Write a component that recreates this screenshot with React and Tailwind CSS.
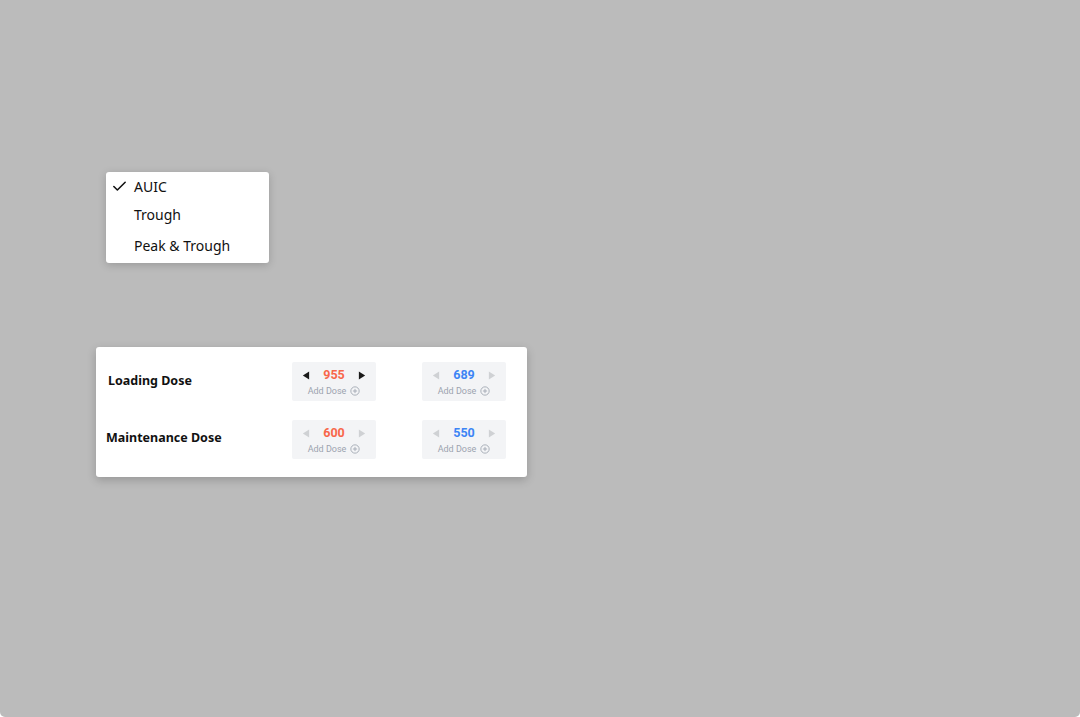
import { Check } from 'lucide-react'

const ROWS = [
  {
    label: 'Loading Dose',
    pad: 'pl-[12px] pb-[1px]',
    doses: [
      { value: 955, color: 'text-[#f8674a]', active: true },
      { value: 689, color: 'text-[#3d84f5]', active: false },
    ],
  },
  {
    label: 'Maintenance Dose',
    pad: 'pl-[10px] pb-[3px]',
    doses: [
      { value: 600, color: 'text-[#f8674a]', active: false },
      { value: 550, color: 'text-[#3d84f5]', active: false },
    ],
  },
]

const Tri = ({ dir, active }) => (
  <svg viewBox="0 0 8 10" width="8" height="9" className={active ? 'text-[#1a1a1a]' : 'text-[#cfd1d4]'}>
    {dir === 'left'
      ? <path d="M7.5 0.5v9L0.5 5z" fill="currentColor" />
      : <path d="M0.5 0.5v9l7-4.5z" fill="currentColor" />}
  </svg>
)

const PlusCircle = () => (
  <svg viewBox="0 0 12 12" width="10" height="10" fill="none" stroke="#9ca3af" strokeWidth="1">
    <circle cx="6" cy="6" r="5" />
    <path d="M6 3.5v5M3.5 6h5" />
  </svg>
)

function DoseBox({ value, color, active }) {
  return (
    <div className="w-[84px] h-[39px] bg-[#f3f4f6] rounded-[2px] flex flex-col items-center pt-[6px] font-['Roboto',sans-serif]">
      <div className="flex items-center w-full justify-between px-[10px] h-[15px]">
        <Tri dir="left" active={active} />
        <span className={`text-[12.5px] font-bold leading-none ${color}`}>{value}</span>
        <Tri dir="right" active={active} />
      </div>
      <div className="flex items-center gap-[4px] mt-[3px] text-[9px] text-[#9ca3af] leading-none">
        <span>Add Dose</span>
        <PlusCircle />
      </div>
    </div>
  )
}

export default function App() {
  return (
    <div className="w-[1080px] h-[717px] bg-[#bbbbbb] rounded-b-[5px] overflow-hidden font-['Noto_Sans',sans-serif]">
      <div className="pt-[172px] pl-[106px]">
        {/* metric dropdown */}
        <div className="w-[163px] h-[91px] bg-white rounded-[3px] shadow-[0_2px_8px_rgba(0,0,0,0.18)] pt-[4px] text-[14px] text-[#111]">
          <div className="flex items-center h-[20px]">
            <Check size={17} strokeWidth={2.2} className="ml-[5px] mr-[6px] text-[#111]" />
            <span>AUIC</span>
          </div>
          <div className="flex items-center h-[20px] mt-[8px] pl-[28px]">Trough</div>
          <div className="flex items-center h-[20px] mt-[11px] pl-[28px]">Peak &amp; Trough</div>
        </div>
      </div>

      <div className="ml-[96px] mt-[84px] w-[431px] h-[130px] bg-white rounded-[3px] shadow-[0_3px_10px_rgba(0,0,0,0.2)] pt-[15px] flex flex-col gap-[19px]">
        {ROWS.map(row => (
          <div key={row.label} className="flex items-center">
            <div className={`w-[196px] ${row.pad} text-[12.5px] font-bold text-[#111]`}>{row.label}</div>
            <div className="flex gap-[46px]">
              {row.doses.map(d => <DoseBox key={d.value} {...d} />)}
            </div>
          </div>
        ))}
      </div>
    </div>
  )
}
